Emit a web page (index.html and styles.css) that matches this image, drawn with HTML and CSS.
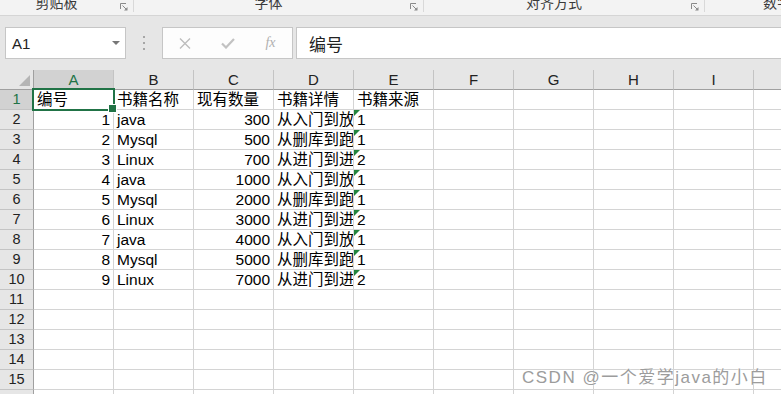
FILE: index.html
```html
<!DOCTYPE html>
<html>
<head>
	<meta charset="utf-8">
	<title>Sheet1</title>
	<link rel="stylesheet" href="styles.css">
</head>
<body>
	<!-- ribbon group labels (cut off at the top) -->
	<div class="ribbon">
		<div class="group g1">
			<span class="label">剪贴板</span>
			<svg class="launcher" viewBox="0 0 8 8"><path d="M0.5 6V0.5H6" fill="none" stroke="#8a8a8a"/><path d="M2.5 2.5L6.5 6.5" stroke="#8a8a8a"/><path d="M4 7.5H7.5V4z" fill="#8a8a8a"/></svg>
		</div>
		<div class="group g2">
			<span class="label">字体</span>
			<svg class="launcher" viewBox="0 0 8 8"><path d="M0.5 6V0.5H6" fill="none" stroke="#8a8a8a"/><path d="M2.5 2.5L6.5 6.5" stroke="#8a8a8a"/><path d="M4 7.5H7.5V4z" fill="#8a8a8a"/></svg>
		</div>
		<div class="group g3">
			<span class="label">对齐方式</span>
			<svg class="launcher" viewBox="0 0 8 8"><path d="M0.5 6V0.5H6" fill="none" stroke="#8a8a8a"/><path d="M2.5 2.5L6.5 6.5" stroke="#8a8a8a"/><path d="M4 7.5H7.5V4z" fill="#8a8a8a"/></svg>
		</div>
		<div class="group g4">
			<span class="label">数字</span>
		</div>
	</div>

	<!-- name box + formula bar -->
	<div class="formula-bar">
		<div class="name-box"><span>A1</span><span class="caret"></span></div>
		<div class="grip"><i></i><i></i><i></i></div>
		<div class="fx-buttons">
			<span><svg width="12" height="11" viewBox="0 0 12 11"><path d="M1 0.5L11 10.5M11 0.5L1 10.5" stroke="#bdbdbd" stroke-width="1.4"/></svg></span>
			<span><svg width="14" height="11" viewBox="0 0 14 11"><path d="M1 5.5L5 9.5L13 1" fill="none" stroke="#c2c2c2" stroke-width="2.2"/></svg></span>
			<span class="fx">fx</span>
		</div>
		<div class="formula-input">编号</div>
	</div>

	<!-- worksheet -->
	<div class="sheet">
		<div class="grid">
			<div class="corner"></div><div class="ch on">A</div><div class="ch">B</div><div class="ch">C</div><div class="ch">D</div><div class="ch">E</div><div class="ch">F</div><div class="ch">G</div><div class="ch">H</div><div class="ch">I</div><div class="ch">J</div>

			<div class="rh on">1</div><div>编号</div><div>书籍名称</div><div>现有数量</div><div>书籍详情</div><div>书籍来源</div><div></div><div></div><div></div><div></div><div></div>
			<div class="rh">2</div><div class="n">1</div><div>java</div><div class="n">300</div><div>从入门到放弃</div><div class="t">1</div><div></div><div></div><div></div><div></div><div></div>
			<div class="rh">3</div><div class="n">2</div><div>Mysql</div><div class="n">500</div><div>从删库到跑路</div><div class="t">1</div><div></div><div></div><div></div><div></div><div></div>
			<div class="rh">4</div><div class="n">3</div><div>Linux</div><div class="n">700</div><div>从进门到进阶</div><div class="t">2</div><div></div><div></div><div></div><div></div><div></div>
			<div class="rh">5</div><div class="n">4</div><div>java</div><div class="n">1000</div><div>从入门到放弃</div><div class="t">1</div><div></div><div></div><div></div><div></div><div></div>
			<div class="rh">6</div><div class="n">5</div><div>Mysql</div><div class="n">2000</div><div>从删库到跑路</div><div class="t">1</div><div></div><div></div><div></div><div></div><div></div>
			<div class="rh">7</div><div class="n">6</div><div>Linux</div><div class="n">3000</div><div>从进门到进阶</div><div class="t">2</div><div></div><div></div><div></div><div></div><div></div>
			<div class="rh">8</div><div class="n">7</div><div>java</div><div class="n">4000</div><div>从入门到放弃</div><div class="t">1</div><div></div><div></div><div></div><div></div><div></div>
			<div class="rh">9</div><div class="n">8</div><div>Mysql</div><div class="n">5000</div><div>从删库到跑路</div><div class="t">1</div><div></div><div></div><div></div><div></div><div></div>
			<div class="rh">10</div><div class="n">9</div><div>Linux</div><div class="n">7000</div><div>从进门到进阶</div><div class="t">2</div><div></div><div></div><div></div><div></div><div></div>
			<div class="rh">11</div><div></div><div></div><div></div><div></div><div></div><div></div><div></div><div></div><div></div><div></div>
			<div class="rh">12</div><div></div><div></div><div></div><div></div><div></div><div></div><div></div><div></div><div></div><div></div>
			<div class="rh">13</div><div></div><div></div><div></div><div></div><div></div><div></div><div></div><div></div><div></div><div></div>
			<div class="rh">14</div><div></div><div></div><div></div><div></div><div></div><div></div><div></div><div></div><div></div><div></div>
			<div class="rh">15</div><div></div><div></div><div></div><div></div><div></div><div></div><div></div><div></div><div></div><div></div>
			<div class="rh">16</div><div></div><div></div><div></div><div></div><div></div><div></div><div></div><div></div><div></div><div></div>
		</div>
		<div class="selection"></div>
	</div>

	<div class="watermark">CSDN @一个爱学java的小白</div>
</body>
</html>
```

FILE: styles.css
```css
/* Excel-ish worksheet */

* { box-sizing: border-box; }

body {
	margin: 0;
	width: 781px;
	height: 394px;
	overflow: hidden;
	position: relative;
	background: #fff;
	font-family: "Liberation Sans", "Noto Sans CJK SC", sans-serif;
}

/* ribbon labels */
.ribbon {
	display: flex;
	height: 16px;
	background: #f3f3f3;
	border-bottom: 1px solid #d5d5d5;
	overflow: hidden;
}
.group {
	display: flex;
	flex-shrink: 0;
	align-items: flex-start;
	height: 12px;
	border-right: 1px solid #d9d9d9;
}
.g1 { width: 134px; }
.g2 { width: 290px; }
.g3 { width: 281px; }
.g4 { flex: 1 1 auto; min-width: 0; border-right: 0; overflow: hidden; }
.label {
	flex: 1;
	margin-top: -5px;
	font-size: 14px;
	line-height: 16px;
	text-align: center;
	color: #3a3a3a;
	white-space: nowrap;
}
.g4 .label { text-align: left; padding-left: 58px; }
.launcher {
	width: 8px;
	height: 8px;
	margin: 3px 5px 0 7px;
}

/* formula bar */
.formula-bar {
	display: flex;
	height: 54px;
	padding: 11px 0 11px 5px;
	background: #e6e6e6;
}
.name-box {
	width: 121px;
	display: flex;
	align-items: center;
	justify-content: space-between;
	padding: 0 5px 0 6px;
	background: #fff;
	border: 1px solid #c6c6c6;
	font-size: 15px;
	color: #222;
}
.caret {
	border-top: 4px solid #777;
	border-left: 4px solid transparent;
	border-right: 4px solid transparent;
}
.grip {
	width: 36px;
	display: flex;
	flex-direction: column;
	align-items: center;
	justify-content: center;
	gap: 4px;
}
.grip i {
	width: 2px;
	height: 2px;
	background: #a6a6a6;
}
.fx-buttons {
	width: 131px;
	display: flex;
	background: #fdfdfd;
	border: 1px solid #c6c6c6;
}
.fx-buttons span {
	flex: 1;
	display: flex;
	align-items: center;
	justify-content: center;
}
.fx {
	font-family: "Liberation Serif", serif;
	font-style: italic;
	font-size: 14px;
	color: #b0b0b0;
}
.formula-input {
	flex: 1;
	margin-left: 3px;
	margin-right: -2px;
	display: flex;
	align-items: center;
	padding-left: 12px;
	background: #fff;
	border: 1px solid #c6c6c6;
	font-size: 17px;
	color: #222;
}

/* grid */
.sheet { position: relative; }
.grid {
	display: grid;
	grid-template-columns: 34px repeat(10, 80px);
	grid-auto-rows: 20px;
	font-size: 15.5px;
}
.grid > div {
	position: relative;
	padding: 0 3px;
	line-height: 19px;
	white-space: nowrap;
	overflow: hidden;
	color: #000;
	border-right: 1px solid #d4d4d4;
	border-bottom: 1px solid #d4d4d4;
}
.grid .n { text-align: right; }
.grid .t::before {
	content: "";
	position: absolute;
	left: 0;
	top: 0;
	border-style: solid;
	border-width: 6px 6px 0 0;
	border-color: #21843c transparent transparent transparent;
}
.grid .corner {
	background: #e6e6e6;
	border-right-color: #a0a0a0;
	border-bottom-color: #a0a0a0;
}
.grid .corner::after {
	content: "";
	position: absolute;
	right: 3px;
	bottom: 3px;
	border-style: solid;
	border-width: 0 0 11px 11px;
	border-color: transparent transparent #b5b5b5 transparent;
}
.grid .ch {
	background: #e6e6e6;
	text-align: center;
	font-size: 15px;
	color: #222;
	border-right-color: #c4c4c4;
	border-bottom-color: #a0a0a0;
}
.grid .rh {
	padding: 0;
	background: #e6e6e6;
	text-align: center;
	font-size: 14.5px;
	color: #222;
	border-right-color: #a0a0a0;
	border-bottom-color: #c4c4c4;
}
.grid .on {
	background: #d2d2d2;
	color: #217346;
}

.selection {
	position: absolute;
	left: 32px;
	top: 18px;
	width: 83px;
	height: 23px;
	border: 2px solid #217346;
}
.selection::after {
	content: "";
	position: absolute;
	right: -4px;
	bottom: -4px;
	width: 7px;
	height: 7px;
	background: #217346;
	border: 1px solid #fff;
}

.watermark {
	position: absolute;
	left: 522px;
	top: 363px;
	font-size: 17px;
	letter-spacing: 1.5px;
	color: #9c9c9c;
	white-space: nowrap;
	text-shadow: 0 0 2px #fff, 0 0 1px #fff;
}
```
